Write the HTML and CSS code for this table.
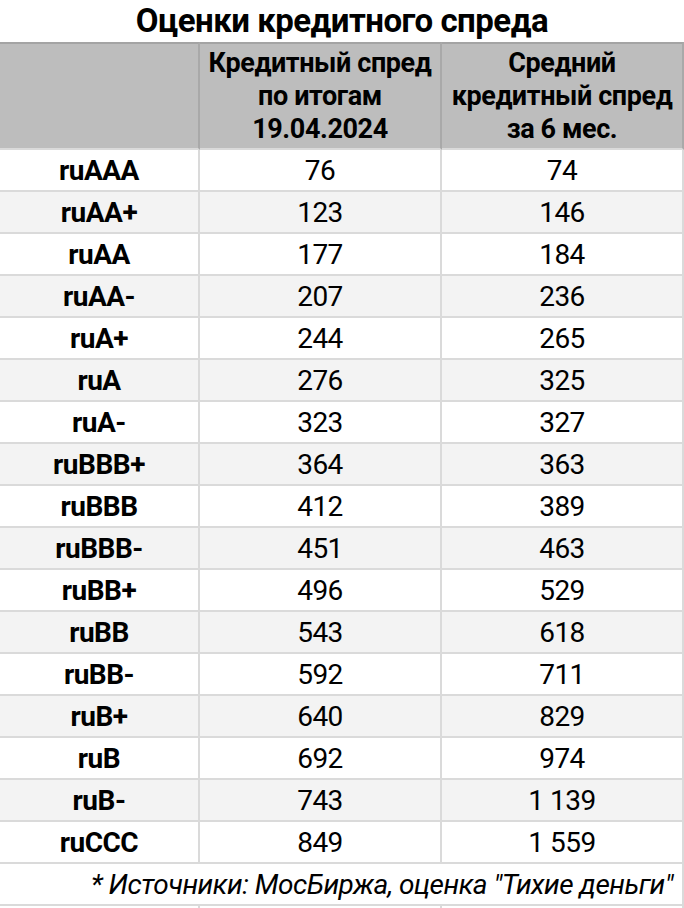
FILE: index.html
```html
<!DOCTYPE html>
<html lang="ru">
<head>
<meta charset="utf-8">
<link rel="stylesheet" href="styles.css">
</head>
<body>
<h1 class="title">Оценки кредитного спреда</h1>
<div class="table">
  <div class="cell head"></div>
  <div class="cell head">Кредитный спред<br>по итогам<br>19.04.2024</div>
  <div class="cell head">Средний<br>кредитный спред<br>за 6 мес.</div>

  <div class="cell label">ruAAA</div><div class="cell">76</div><div class="cell">74</div>
  <div class="cell label alt">ruAA+</div><div class="cell alt">123</div><div class="cell alt">146</div>
  <div class="cell label">ruAA</div><div class="cell">177</div><div class="cell">184</div>
  <div class="cell label alt">ruAA-</div><div class="cell alt">207</div><div class="cell alt">236</div>
  <div class="cell label">ruA+</div><div class="cell">244</div><div class="cell">265</div>
  <div class="cell label alt">ruA</div><div class="cell alt">276</div><div class="cell alt">325</div>
  <div class="cell label">ruA-</div><div class="cell">323</div><div class="cell">327</div>
  <div class="cell label alt">ruBBB+</div><div class="cell alt">364</div><div class="cell alt">363</div>
  <div class="cell label">ruBBB</div><div class="cell">412</div><div class="cell">389</div>
  <div class="cell label alt">ruBBB-</div><div class="cell alt">451</div><div class="cell alt">463</div>
  <div class="cell label">ruBB+</div><div class="cell">496</div><div class="cell">529</div>
  <div class="cell label alt">ruBB</div><div class="cell alt">543</div><div class="cell alt">618</div>
  <div class="cell label">ruBB-</div><div class="cell">592</div><div class="cell">711</div>
  <div class="cell label alt">ruB+</div><div class="cell alt">640</div><div class="cell alt">829</div>
  <div class="cell label">ruB</div><div class="cell">692</div><div class="cell">974</div>
  <div class="cell label alt">ruB-</div><div class="cell alt">743</div><div class="cell alt">1 139</div>
  <div class="cell label">ruCCC</div><div class="cell">849</div><div class="cell">1 559</div>

  <div class="cell note">* Источники: МосБиржа, оценка "Тихие деньги"</div>
  <div class="cell"></div><div class="cell"></div><div class="cell"></div>
</div>
</body>
</html>
```

FILE: styles.css
```css
html, body {
  margin: 0;
  padding: 0;
  background: #ffffff;
}
body {
  width: 684px;
  font-family: Roboto, "Liberation Sans", sans-serif;
  color: #000;
  overflow: hidden;
}
.title {
  margin: 0;
  height: 42px;
  line-height: 42px;
  font-size: 33px;
  font-weight: 700;
  text-align: center;
  letter-spacing: -0.5px;
}
.table {
  display: grid;
  grid-template-columns: 200px 242px 242px;
}
.cell {
  box-sizing: border-box;
  height: 42px;
  border-right: 2px solid #dadada;
  border-bottom: 2px solid #dadada;
  display: flex;
  align-items: center;
  justify-content: center;
  font-size: 28px;
  letter-spacing: -0.5px;
  background: #ffffff;
}
.cell.alt {
  background: #f3f3f3;
}
.cell.label {
  font-weight: 700;
}
.cell.head {
  height: 108px;
  background: #bdbdbd;
  border-top: 2px solid #a4a4a4;
  border-right-color: #a9a9a9;
  border-bottom-color: #dadada;
  font-weight: 700;
  font-size: 27px;
  line-height: 33px;
  letter-spacing: -0.4px;
  text-align: center;
}
.cell.note {
  grid-column: 1 / 4;
  justify-content: flex-end;
  padding-right: 9px;
  font-style: italic;
  font-size: 28px;
}
```
